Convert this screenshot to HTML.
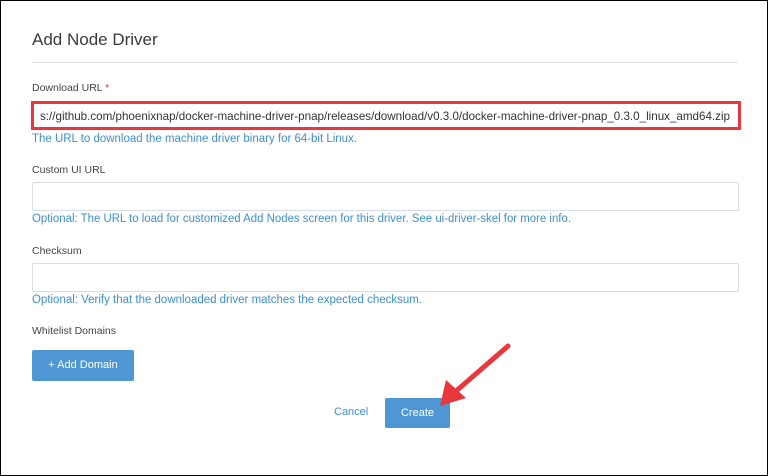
<!DOCTYPE html>
<html><head><style>
body{margin:0;width:768px;height:476px;overflow:hidden;background:#fff;font-family:"Liberation Sans",sans-serif}
.frame{position:absolute;left:0;top:0;width:766px;height:474px;border:1px solid #000}
.a{position:absolute;white-space:nowrap}
.lbl{font-size:10.5px;color:#444}
.help{font-size:11.5px;color:#3d8fd1}
.inp{position:absolute;left:32px;width:705px;height:27px;border:1px solid #d8dde6;border-radius:2px;background:#fff}
.btn{position:absolute;background:#4f97d4;color:#fff;border-radius:2px;font-size:11px;text-align:center}
</style></head><body>
<div class="frame"></div>
<div class="a" style="left:32px;top:30px;font-size:17px;color:#3a3a3a">Add Node Driver</div>
<div class="a" style="left:32px;top:62px;width:706px;height:1px;background:#dcdfe6"></div>
<div class="a lbl" style="left:32px;top:82px">Download URL <span style="color:#e0342e">*</span></div>
<div class="a" style="left:31px;top:101px;width:704px;height:23px;border:3px solid #e8383d;background:#fff"></div>
<svg class="a" style="left:0;top:0" width="768" height="476">
<text x="40" y="120" font-size="12" fill="#333" font-family="Liberation Sans" textLength="690" lengthAdjust="spacingAndGlyphs">s://github.com/phoenixnap/docker-machine-driver-pnap/releases/download/v0.3.0/docker-machine-driver-pnap_0.3.0_linux_amd64.zip</text>
<text x="32" y="142" font-size="11.5" fill="#3d8fd1" font-family="Liberation Sans" textLength="325" lengthAdjust="spacingAndGlyphs">The URL to download the machine driver binary for 64-bit Linux.</text>
<text x="32" y="222" font-size="11.5" fill="#3d8fd1" font-family="Liberation Sans" textLength="539" lengthAdjust="spacingAndGlyphs">Optional: The URL to load for customized Add Nodes screen for this driver. See ui-driver-skel for more info.</text>
<text x="32" y="303" font-size="11.5" fill="#3d8fd1" font-family="Liberation Sans" textLength="390" lengthAdjust="spacingAndGlyphs">Optional: Verify that the downloaded driver matches the expected checksum.</text>
</svg>
<div class="a lbl" style="left:32px;top:164px">Custom UI URL</div>
<div class="inp" style="top:182px"></div>
<div class="a lbl" style="left:32px;top:245px">Checksum</div>
<div class="inp" style="top:263px"></div>
<div class="a lbl" style="left:32px;top:325px">Whitelist Domains</div>
<div class="btn" style="left:32px;top:350px;width:102px;height:31px;line-height:31px">+ Add Domain</div>
<div class="a" style="left:334px;top:406px;font-size:11px;color:#3d8fd1">Cancel</div>
<div class="btn" style="left:385px;top:398px;width:65px;height:30px;line-height:30px">Create</div>
<svg class="a" style="left:0;top:0" width="768" height="476">
<line x1="508" y1="346" x2="455" y2="392" stroke="#e8383d" stroke-width="5" stroke-linecap="round"/>
<polygon points="440,406 446,380 466,398" fill="#e8383d"/>
</svg>
</body></html>
